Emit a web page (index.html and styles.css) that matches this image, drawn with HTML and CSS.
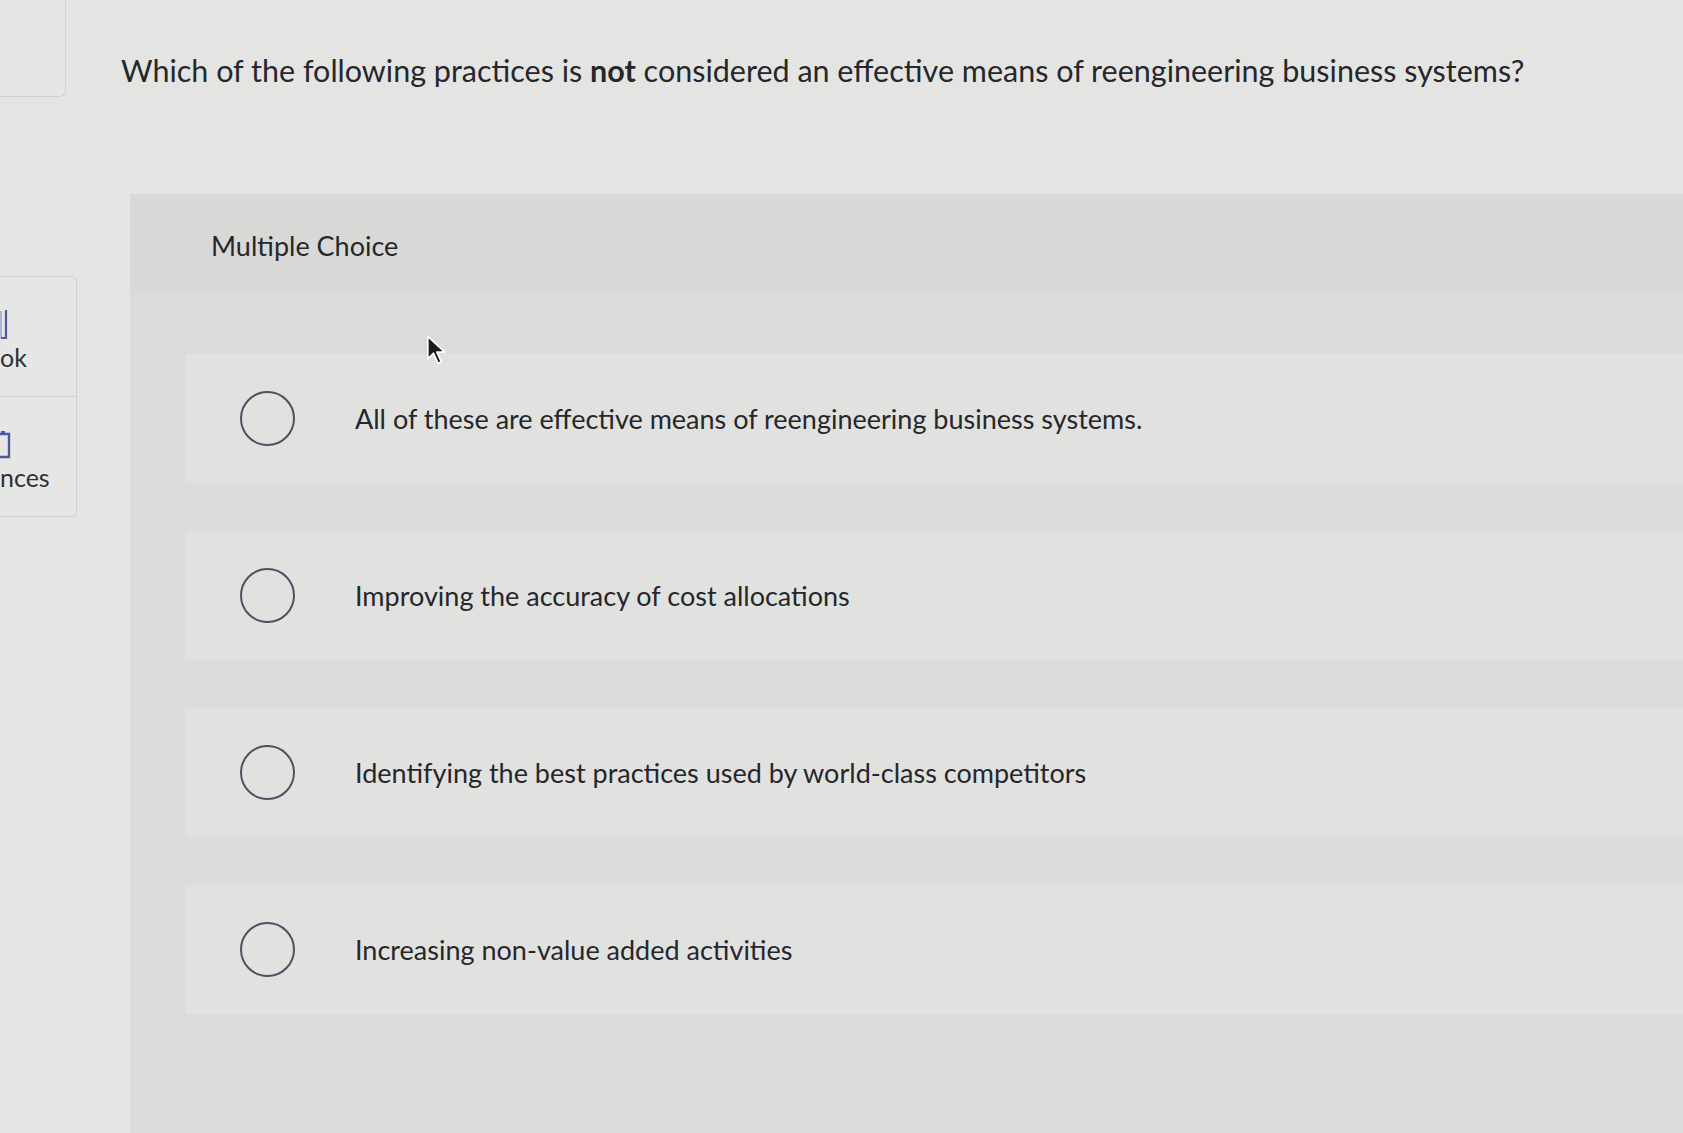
FILE: index.html
```html
<!DOCTYPE html>
<html lang="en">
<head>
<meta charset="utf-8">
<title>Multiple Choice</title>
<link rel="stylesheet" href="styles.css">
</head>
<body>
<div class="page">
  <aside class="sidebar">
    <div class="side-card top"></div>
    <div class="side-card tools">
      <div class="tool">
        <svg class="tool-icon" width="24" height="32" viewBox="0 0 24 32"><path d="M6 1 V29 H1" fill="none" stroke="#4a5aa0" stroke-width="2.2"/><path d="M1 2 V29" stroke="#4a5aa0" stroke-width="1.2" opacity="0.6"/></svg>
        <span class="tool-label">ok</span>
      </div>
      <div class="tool">
        <svg class="tool-icon" width="24" height="32" viewBox="0 0 24 32"><path d="M0 5 H9 V28 H0" fill="none" stroke="#4a5aa0" stroke-width="2.4"/><path d="M1 3 H5" stroke="#4a5aa0" stroke-width="2"/></svg>
        <span class="tool-label">nces</span>
      </div>
    </div>
  </aside>
  <main class="main">
    <h1 class="question">Which of the following practices is <b>not</b> considered an effective means of reengineering business systems?</h1>
    <section class="panel">
      <div class="panel-head">Multiple Choice</div>
      <div class="options">
        <label class="option"><span class="radio"></span><span class="opt-text">All of these are effective means of reengineering business systems.</span></label>
        <label class="option"><span class="radio"></span><span class="opt-text">Improving the accuracy of cost allocations</span></label>
        <label class="option"><span class="radio"></span><span class="opt-text">Identifying the best practices used by world-class competitors</span></label>
        <label class="option"><span class="radio"></span><span class="opt-text">Increasing non-value added activities</span></label>
      </div>
    </section>
  </main>
  <svg class="cursor" width="26" height="34" viewBox="0 0 22 30"><path d="M2 2 L2 22 L7 17 L11 26 L14 24.5 L10 16 L17 16 Z" fill="#1c1c1e" stroke="#fff" stroke-width="1.5" stroke-linejoin="round"/></svg>
</div>
</body>
</html>
```

FILE: styles.css
```css
html, body {
  margin: 0;
  padding: 0;
  height: 100%;
}
body {
  background: #e4e5e3;
  font-family: Lato, "Open Sans", "Liberation Sans", sans-serif;
  color: #2b2c30;
  overflow: hidden;
}
.page {
  position: relative;
  display: flex;
  min-height: 1133px;
}
.sidebar {
  width: 77px;
  flex: none;
  display: flex;
  flex-direction: column;
}
.side-card {
  border: 1.5px solid #d0d1cf;
  border-left: none;
  border-radius: 0 6px 6px 0;
  background: #e6e7e5;
  box-sizing: border-box;
}
.side-card.top {
  width: 66px;
  height: 97px;
  border-top: none;
  border-radius: 0 0 6px 0;
}
.side-card.tools {
  margin-top: 179px;
  width: 77px;
  height: 241px;
  display: flex;
  flex-direction: column;
  overflow: hidden;
}
.tool {
  flex: 1;
  display: flex;
  flex-direction: column;
  align-items: flex-start;
  justify-content: center;
  padding-top: 6px;
}
.tool + .tool {
  border-top: 1.5px solid #d0d1cf;
}
.tool-label {
  font-size: 25px;
  line-height: 28px;
  color: #2f3034;
  white-space: nowrap;
  margin-top: 2px;
}
.main {
  flex: 1;
  display: flex;
  flex-direction: column;
}
.question {
  margin: 51px 0 0 44px;
  font-size: 30.5px;
  line-height: 38px;
  font-weight: 400;
  color: #26272b;
  white-space: nowrap;
}
.question b {
  font-weight: 700;
}
.panel {
  margin: 105px 0 0 53px;
  background: #dbdcda;
  flex: 1;
  border-radius: 4px 0 0 0;
}
.panel-head {
  height: 96px;
  background: #d8d9d7;
  display: flex;
  align-items: center;
  padding-left: 81px;
  padding-top: 6px;
  box-sizing: border-box;
  font-size: 27px;
  color: #26272b;
}
.options {
  display: flex;
  flex-direction: column;
  gap: 48px;
  padding: 64px 0 0 55px;
}
.option {
  height: 129px;
  background: #e1e2e0;
  display: flex;
  align-items: center;
  padding-left: 55px;
  gap: 60px;
  border-radius: 3px 0 0 3px;
}
.radio {
  width: 55px;
  height: 55px;
  box-sizing: border-box;
  border: 2.5px solid #4c5163;
  border-radius: 50%;
  flex: none;
}
.opt-text {
  font-size: 27px;
  color: #26272b;
}
.cursor {
  position: absolute;
  left: 425px;
  top: 334px;
}
```
